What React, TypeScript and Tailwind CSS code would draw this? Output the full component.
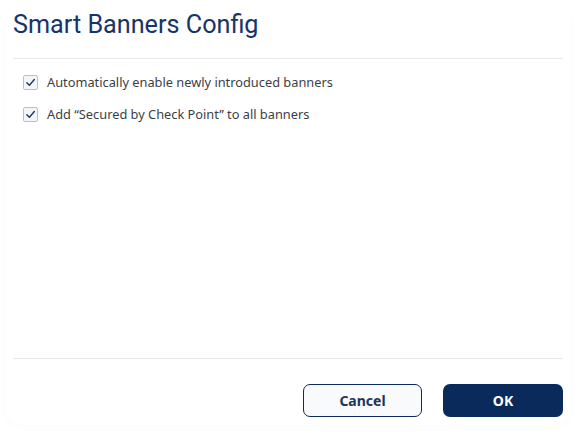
import React from "react";

function Check() {
  return (
    <span className="flex h-[15px] w-[15px] items-center justify-center rounded-[2px] border border-[#b9c0cc] bg-[#f3f5f8]">
      <svg width="11" height="11" viewBox="0 0 12 12" fill="none">
        <path d="M2 6.2 L4.8 9 L10.2 2.8" stroke="#1c3566" strokeWidth="1.5" strokeLinecap="round" strokeLinejoin="round" />
      </svg>
    </span>
  );
}

export default function App() {
  return (
    <div className="h-[437px] w-[576px] bg-white p-[4px_6px_12px_6px]" style={{ fontFamily: '"Noto Sans", "Open Sans", sans-serif' }}>
      <div className="flex h-full flex-col rounded-[16px] bg-white shadow-[0_2px_8px_rgba(0,0,0,0.02)]">
        <div className="flex h-[54px] items-center pl-[7px] pb-[12px]">
          <h1 className="text-[25.2px] leading-none text-[#17346a]" style={{ fontFamily: 'Roboto, "Noto Sans", sans-serif' }}>Smart Banners Config</h1>
        </div>
        <div className="mx-[7px] h-px bg-[#e8e9eb]" />
        <div className="flex flex-1 flex-col gap-[13px] pl-[17px] pt-[14px]">
          <label className="flex items-center gap-[9px] text-[12.8px] text-[#3b3f45]">
            <Check />
            <span>Automatically enable newly introduced banners</span>
          </label>
          <label className="flex items-center gap-[9px] text-[12.8px] text-[#3b3f45]">
            <Check />
            <span>Add “Secured by Check Point” to all banners</span>
          </label>
        </div>
        <div className="mx-[7px] h-px bg-[#e8e9eb]" />
        <div className="flex justify-end gap-[21px] px-[7px] pt-[25px] pb-[8px]">
          <button className="h-[33px] w-[119px] rounded-[7px] border border-[#0c2a5b] bg-[#f9fafb] text-[14px] font-bold text-[#1b3563]">
            Cancel
          </button>
          <button className="h-[33px] w-[120px] rounded-[7px] bg-[#0b2a5c] text-[14px] font-bold text-white">
            OK
          </button>
        </div>
      </div>
    </div>
  );
}
